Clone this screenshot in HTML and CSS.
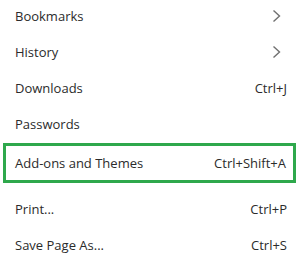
FILE: index.html
```html
<!DOCTYPE html>
<html lang="en">
<head>
    <meta charset="UTF-8">
    <title>Menu</title>
    <link rel="stylesheet" href="styles.css">
</head>
<body>
    <div class="menu">
        <div class="item">
            <span class="label">Bookmarks</span>
            <svg class="chevron" width="9" height="14" viewBox="0 0 9 14"><path d="M1.5 1.5 L7.5 7 L1.5 12.5" fill="none" stroke="#707070" stroke-width="1.4"/></svg>
        </div>
        <div class="item">
            <span class="label">History</span>
            <svg class="chevron" width="9" height="14" viewBox="0 0 9 14"><path d="M1.5 1.5 L7.5 7 L1.5 12.5" fill="none" stroke="#707070" stroke-width="1.4"/></svg>
        </div>
        <div class="item">
            <span class="label">Downloads</span>
            <span class="shortcut">Ctrl+J</span>
        </div>
        <div class="item">
            <span class="label">Passwords</span>
        </div>
        <div class="item highlighted">
            <span class="label">Add-ons and Themes</span>
            <span class="shortcut">Ctrl+Shift+A</span>
        </div>
        <div class="separator"></div>
        <div class="item">
            <span class="label">Print...</span>
            <span class="shortcut">Ctrl+P</span>
        </div>
        <div class="item">
            <span class="label">Save Page As...</span>
            <span class="shortcut">Ctrl+S</span>
        </div>
    </div>
</body>
</html>
```

FILE: styles.css
```css
body {
    margin: 0;
    background: #fff;
    font-family: "Open Sans", "Noto Sans", sans-serif;
    font-size: 13px;
    color: #2b2b2b;
}
.menu {
    margin-top: -2px;
    width: 300px;
}
.item {
    display: flex;
    align-items: center;
    justify-content: space-between;
    height: 36px;
    padding: 0 13px 0 15px;
    box-sizing: border-box;
}
.chevron {
    margin-right: 6px;
}
.highlighted {
    height: 40px;
    margin: 1px 4px 0 3px;
    padding: 0 7px 0 9px;
    border: 3px solid #2ea84c;
}
.separator {
    height: 8px;
}
```
